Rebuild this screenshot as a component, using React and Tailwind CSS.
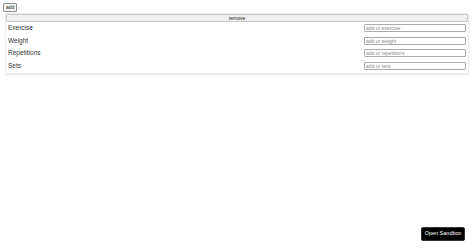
import React from 'react'

const fields = [
  { name: 'Exercise', placeholder: 'add ur exercise' },
  { name: 'Weight', placeholder: 'add ur weight' },
  { name: 'Repetitions', placeholder: 'add ur repetitions' },
  { name: 'Sets', placeholder: 'add ur sets' },
]

export default function App() {
  return (
    <div className="w-[474px] h-[248px] bg-white relative flex flex-col" style={{ fontFamily: '"Liberation Sans", Arial, sans-serif' }}>
      <div className="flex pt-[3px] px-[3px]">
        <button className="h-[9px] px-[2px] text-[5px] leading-none text-[#222] bg-[#f3f3f3] border border-[#8f8f8f] rounded-[1px]">
          add
        </button>
      </div>
      <div className="flex flex-col mt-[1px] mx-[5px] rounded-[2px] border border-[#ececec] shadow-[0_1px_2px_rgba(0,0,0,0.1)]">
        <button className="w-full h-[8px] text-[5px] leading-none text-[#222] bg-[#efefef] border border-[#c8c8c8] rounded-[1px]">
          remove
        </button>
        <div className="flex flex-col pb-[1px]">
          {fields.map((f) => (
            <div key={f.name} className="flex items-center justify-between h-[12.5px] pl-[2px] pr-[2px]">
              <span className="text-[6.5px] leading-none text-[#333]">{f.name}</span>
              <input
                placeholder={f.placeholder}
                className="w-[102px] h-[8px] px-[1px] text-[5px] leading-none border border-[#aaaaaa] rounded-[1px] placeholder:text-[#8a8a8a] outline-none"
              />
            </div>
          ))}
        </div>
      </div>
      <button className="absolute right-[9px] bottom-[7px] w-[44px] h-[14px] bg-black text-white text-[5.5px] leading-none rounded-[2px] border border-[#333]">
        Open Sandbox
      </button>
    </div>
  )
}
